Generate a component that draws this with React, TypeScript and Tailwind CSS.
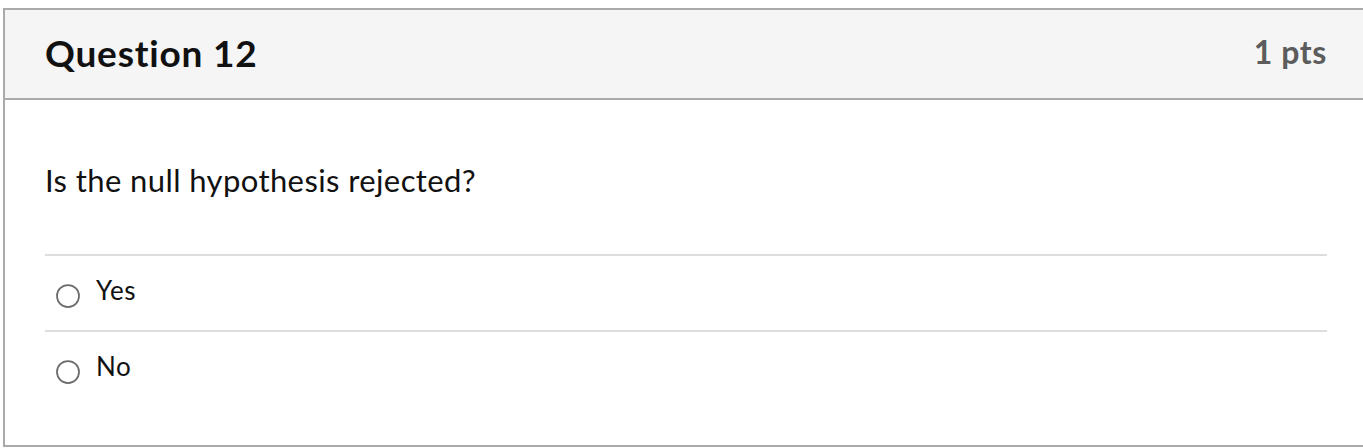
const answers = ["Yes", "No"];

function Radio() {
  return (
    <svg width="24" height="24" viewBox="0 0 24 24" className="mt-[9px] ml-[11px] shrink-0">
      <circle cx="12" cy="12" r="11" fill="#ffffff" stroke="#6b6b6b" strokeWidth="1.75" />
    </svg>
  );
}

export default function App() {
  return (
    <div
      className="h-[448px] w-[1363px] overflow-hidden bg-white pt-[8px] pl-[3px]"
      style={{ fontFamily: "Lato, 'Open Sans', sans-serif" }}
    >
      <div className="w-[1366px] border-2 border-[#aaaaaa]">
        <div className="flex h-[90px] items-center justify-between border-b-2 border-[#aaaaaa] bg-[#f5f5f5] px-[40px] pb-[4px]">
          <h2 className="text-[37px] leading-none font-bold tracking-[0.8px] text-[#111111]">Question 12</h2>
          <div className="text-[32px] leading-none font-bold tracking-[0.6px] text-[#5c5c5c]">1 pts</div>
        </div>
        <div className="px-[40px] pt-[59px] pb-[39px]">
          <div className="text-[31px] leading-[42px] tracking-[0.4px] text-[#111111]">Is the null hypothesis rejected?</div>
          <div className="mt-[53px]">
            {answers.map((a) => (
              <div key={a} className="flex h-[76px] items-start gap-[16px] border-t-2 border-[#dddddd] pt-[19px]">
                <Radio />
                <span className="text-[26px] leading-[30px] tracking-[0.6px] text-[#111111]">{a}</span>
              </div>
            ))}
          </div>
        </div>
      </div>
    </div>
  );
}
